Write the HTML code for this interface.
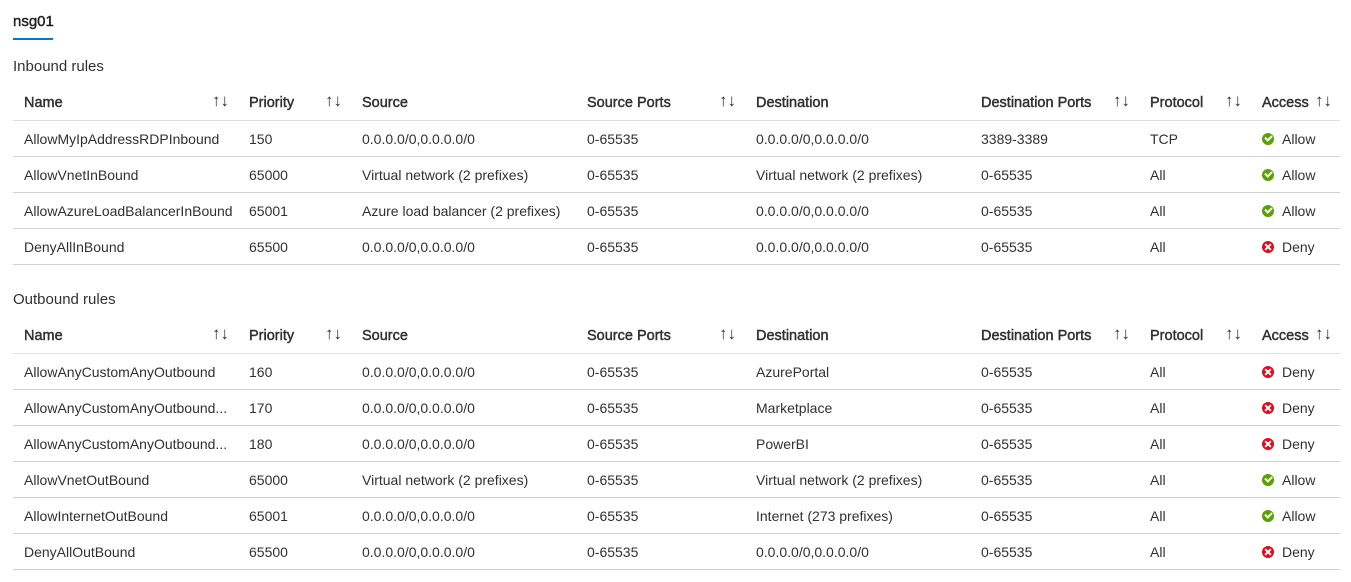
<!DOCTYPE html>
<html><head><meta charset="utf-8"><style>
body{margin:0;background:#fff;font-family:"Liberation Sans",sans-serif;color:#323130;font-size:14px;width:1351px;height:582px;overflow:hidden;position:relative}
.tab{position:absolute;left:13px;top:13px;font-size:15px;-webkit-text-stroke:0.4px #201f1e;color:#201f1e}
.ul{position:absolute;left:13px;top:38px;width:40px;height:2px;background:#0078d4}
.t{position:absolute;left:13px;font-size:15px;color:#323130}
table{position:absolute;left:13px;border-collapse:collapse;table-layout:fixed;width:1327px}
td,th{padding:1px 0 0 11px;height:34px;border-bottom:1px solid #e1dfdd;text-align:left;white-space:nowrap;overflow:hidden;position:relative;font-weight:normal}
th{-webkit-text-stroke:0.45px #323130;color:#323130;height:35px;font-size:14.5px}
td{border-bottom-color:#d2d0ce}
.a{position:absolute;right:9px;top:7px;font-weight:normal;font-size:17px;-webkit-text-stroke:0;color:#323130}
.ic{display:inline-block;width:12px;height:12px;border-radius:50%;vertical-align:-1px;margin-right:8px;position:relative}
.ok{background:#57a300}.no{background:#e00b1c}
.ok:after{content:"";position:absolute;left:3px;top:2px;width:5px;height:3px;border-left:2px solid #fff;border-bottom:2px solid #fff;transform:rotate(-45deg)}
.no:before,.no:after{content:"";position:absolute;left:5px;top:2px;width:2px;height:8px;background:#fff;transform:rotate(45deg)}
.no:after{transform:rotate(-45deg)}
</style></head><body>
<div class="tab">nsg01</div><div class="ul"></div>
<div class="t" style="top:58px">Inbound rules</div>
<table style="top:84px">
<colgroup><col style="width:225px"><col style="width:113px"><col style="width:225px"><col style="width:169px"><col style="width:225px"><col style="width:169px"><col style="width:112px"><col style="width:89px"></colgroup>
<tr><th>Name<span class="a">↑↓</span></th><th>Priority<span class="a">↑↓</span></th><th>Source</th><th>Source Ports<span class="a">↑↓</span></th><th>Destination</th><th>Destination Ports<span class="a">↑↓</span></th><th>Protocol<span class="a">↑↓</span></th><th>Access<span class="a" style="right:8px">↑↓</span></th></tr>
<tr><td>AllowMyIpAddressRDPInbound</td><td>150</td><td>0.0.0.0/0,0.0.0.0/0</td><td>0-65535</td><td>0.0.0.0/0,0.0.0.0/0</td><td>3389-3389</td><td>TCP</td><td><span class="ic ok"></span>Allow</td></tr>
<tr><td>AllowVnetInBound</td><td>65000</td><td>Virtual network (2 prefixes)</td><td>0-65535</td><td>Virtual network (2 prefixes)</td><td>0-65535</td><td>All</td><td><span class="ic ok"></span>Allow</td></tr>
<tr><td>AllowAzureLoadBalancerInBound</td><td>65001</td><td>Azure load balancer (2 prefixes)</td><td>0-65535</td><td>0.0.0.0/0,0.0.0.0/0</td><td>0-65535</td><td>All</td><td><span class="ic ok"></span>Allow</td></tr>
<tr><td>DenyAllInBound</td><td>65500</td><td>0.0.0.0/0,0.0.0.0/0</td><td>0-65535</td><td>0.0.0.0/0,0.0.0.0/0</td><td>0-65535</td><td>All</td><td><span class="ic no"></span>Deny</td></tr>
</table>
<div class="t" style="top:291px">Outbound rules</div>
<table style="top:317px">
<colgroup><col style="width:225px"><col style="width:113px"><col style="width:225px"><col style="width:169px"><col style="width:225px"><col style="width:169px"><col style="width:112px"><col style="width:89px"></colgroup>
<tr><th>Name<span class="a">↑↓</span></th><th>Priority<span class="a">↑↓</span></th><th>Source</th><th>Source Ports<span class="a">↑↓</span></th><th>Destination</th><th>Destination Ports<span class="a">↑↓</span></th><th>Protocol<span class="a">↑↓</span></th><th>Access<span class="a" style="right:8px">↑↓</span></th></tr>
<tr><td>AllowAnyCustomAnyOutbound</td><td>160</td><td>0.0.0.0/0,0.0.0.0/0</td><td>0-65535</td><td>AzurePortal</td><td>0-65535</td><td>All</td><td><span class="ic no"></span>Deny</td></tr>
<tr><td>AllowAnyCustomAnyOutbound...</td><td>170</td><td>0.0.0.0/0,0.0.0.0/0</td><td>0-65535</td><td>Marketplace</td><td>0-65535</td><td>All</td><td><span class="ic no"></span>Deny</td></tr>
<tr><td>AllowAnyCustomAnyOutbound...</td><td>180</td><td>0.0.0.0/0,0.0.0.0/0</td><td>0-65535</td><td>PowerBI</td><td>0-65535</td><td>All</td><td><span class="ic no"></span>Deny</td></tr>
<tr><td>AllowVnetOutBound</td><td>65000</td><td>Virtual network (2 prefixes)</td><td>0-65535</td><td>Virtual network (2 prefixes)</td><td>0-65535</td><td>All</td><td><span class="ic ok"></span>Allow</td></tr>
<tr><td>AllowInternetOutBound</td><td>65001</td><td>0.0.0.0/0,0.0.0.0/0</td><td>0-65535</td><td>Internet (273 prefixes)</td><td>0-65535</td><td>All</td><td><span class="ic ok"></span>Allow</td></tr>
<tr><td>DenyAllOutBound</td><td>65500</td><td>0.0.0.0/0,0.0.0.0/0</td><td>0-65535</td><td>0.0.0.0/0,0.0.0.0/0</td><td>0-65535</td><td>All</td><td><span class="ic no"></span>Deny</td></tr>
</table>
</body></html>
